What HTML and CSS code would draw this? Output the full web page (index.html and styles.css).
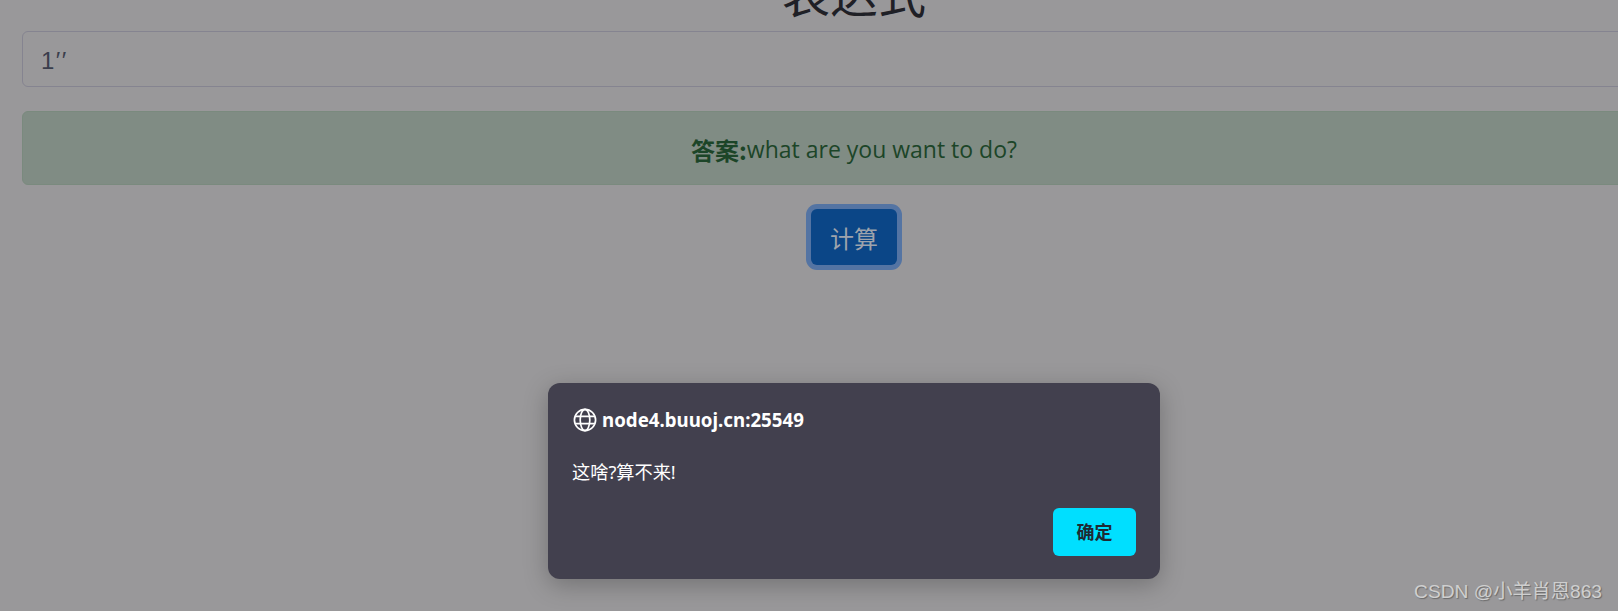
FILE: index.html
```html
<!DOCTYPE html>
<html lang="zh-CN">
<head>
  <meta charset="UTF-8">
  <title>表达式</title>
  <link rel="stylesheet" href="styles.css">
</head>
<body>
  <div class="container">
    <h1 class="title">表达式</h1>
    <input class="expr" type="text" value="1′′">
    <div class="answer"><strong>答案:</strong>what are you want to do?</div>
    <div class="actions"><button class="calc-btn">计算</button></div>
  </div>

  <!-- 浏览器 alert 弹窗 -->
  <div class="dialog">
    <div class="dialog-head">
      <svg class="globe" viewBox="0 0 24 24" fill="none" stroke="#fff" stroke-width="1.7">
        <circle cx="12" cy="12" r="10.6"/>
        <ellipse cx="12" cy="12" rx="4.8" ry="10.6"/>
        <path d="M2.2 8.4h19.6M2.2 15.6h19.6"/>
      </svg>
      <span>node4.buuoj.cn:25549</span>
    </div>
    <p class="dialog-msg">这啥?算不来!</p>
    <div class="dialog-foot"><button class="ok-btn">确定</button></div>
  </div>

  <div class="watermark">CSDN @小羊肖恩863</div>
</body>
</html>
```

FILE: styles.css
```css
:root {
  --bg: #99989a;
  --font-latin: "Open Sans", "Noto Sans CJK SC", sans-serif;
  --font-ui: "Noto Sans", "Noto Sans CJK SC", sans-serif;
}
*, *::before, *::after { box-sizing: border-box; }
html, body { height: 100%; }
body {
  margin: 0;
  background: var(--bg);
  overflow: hidden;
  font-family: var(--font-latin);
}

/* 页面主体 */
.container {
  width: 1664px;
  margin-left: 22px;
  display: flex;
  flex-direction: column;
}
.title {
  margin: -41px 0 0;
  height: 72px;
  line-height: 66px;
  font-size: 48px;
  font-weight: 400;
  text-align: center;
  color: #1f2026;
  font-family: "Noto Sans CJK SC", sans-serif;
}
.expr {
  height: 56px;
  padding: 4px 18px 0;
  border: 1px solid #858490;
  border-radius: 6px;
  background: transparent;
  font: 24px "Liberation Sans", sans-serif;
  letter-spacing: 1.5px;
  color: #3a3d4c;
  outline: none;
}
.answer {
  margin-top: 24px;
  height: 74px;
  padding-top: 2px;
  display: flex;
  align-items: center;
  justify-content: center;
  background: #808c84;
  border: 1px solid #7a8a7e;
  border-radius: 6px;
  font-size: 23px;
  color: #1c4528;
}
.answer strong { font-family: "Noto Sans CJK SC", sans-serif; font-size: 24px; font-weight: 700; }
.actions {
  margin-top: 24px;
  display: flex;
  justify-content: center;
}
.calc-btn {
  width: 86px;
  height: 56px;
  padding: 0;
  border: none;
  border-radius: 6px;
  background: #0b4687;
  box-shadow: 0 0 0 5px #5474a3;
  color: #9ea3ac;
  font: 24px "Noto Sans CJK SC", sans-serif;
}

/* alert 弹窗 */
.dialog {
  position: absolute;
  left: 548px;
  top: 383px;
  width: 612px;
  height: 196px;
  padding: 24px;
  display: flex;
  flex-direction: column;
  background: #42404e;
  border-radius: 12px;
  box-shadow: 0 6px 24px rgba(0, 0, 0, .25);
  color: #fff;
  font-family: var(--font-ui);
}
.dialog-head {
  display: flex;
  align-items: center;
  gap: 5px;
  padding-left: 1px;
  font-size: 18.7px;
  font-weight: 700;
}
.globe { width: 24px; height: 24px; flex: none; }
.dialog-msg {
  margin: 28px 0 0;
  font-size: 18.2px;
  line-height: 24px;
}
.dialog-foot {
  margin-top: auto;
  display: flex;
  justify-content: flex-end;
  transform: translateY(1px);
}
.ok-btn {
  width: 83px;
  height: 48px;
  padding: 0 0 3px;
  border: none;
  border-radius: 6px;
  background: #00dfff;
  color: #1f2a33;
  font: 700 18px "Noto Sans CJK SC", sans-serif;
}

.watermark {
  position: absolute;
  right: 16px;
  top: 576px;
  font: 19.2px "Liberation Sans", "Noto Sans CJK SC", sans-serif;
  color: #cfcfcf;
  text-shadow: 1px 1px 1px #6a6a6a;
}
```
